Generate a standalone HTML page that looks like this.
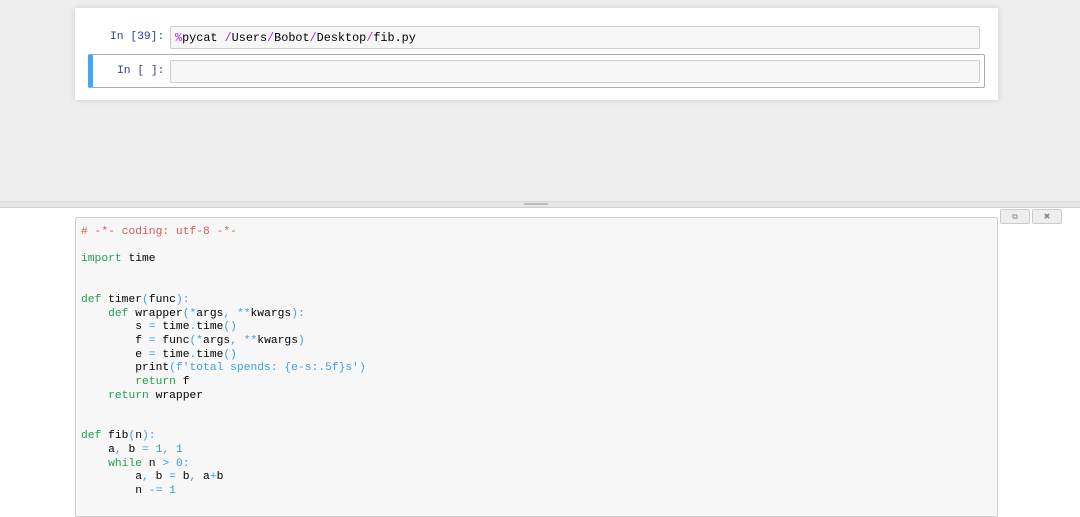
<!DOCTYPE html>
<html><head><meta charset="utf-8"><style>
*{margin:0;padding:0;box-sizing:border-box}
body{width:1080px;height:500px;overflow:hidden;background:#fff;font-family:"Liberation Mono",monospace}
#top{position:absolute;left:0;top:0;width:1080px;height:201px;background:#eeeeee}
#nb{position:absolute;left:75px;top:8px;width:923px;height:92px;background:#fff;box-shadow:0 0 6px rgba(0,0,0,.15)}
.prompt{position:absolute;font-size:11.3px;color:#303f9f;white-space:pre}
.inp{position:absolute;left:170px;width:810px;height:23px;background:#f7f7f7;border:1px solid #cfcfcf;border-radius:2px;font-size:11.8px;line-height:22px;padding-left:4px;color:#000;white-space:pre}
.mg{color:#aa22ff}
#sel{position:absolute;left:88px;top:54px;width:897px;height:34px;border:1px solid #ababab;border-left:5px solid #42a5f5;border-radius:2px}
#div{position:absolute;left:0;top:201px;width:1080px;height:7px;background:#e6e6e6;border-top:1px solid #d6d6d6;border-bottom:1px solid #cfcfcf}
#grip{position:absolute;left:524px;top:203px;width:24px;height:2px;border-top:1px solid #bbb;border-bottom:1px solid #bbb}
.btn{position:absolute;top:209px;width:30px;height:15px;background:#eee;border:1px solid #ccc;border-radius:2px;font-size:8px;color:#888;text-align:center;line-height:13px;font-family:"DejaVu Sans",sans-serif}
#code{position:absolute;left:75px;top:217px;width:923px;height:300px;background:#f7f7f7;border:1px solid #d0d0d0;border-radius:2px;padding:8px 0 0 5px;font-size:11.3px;line-height:13.63px;color:#000;white-space:pre}
.c{color:#e05555}.k{color:#22a050}.p{color:#3c9ee8}.n{color:#35a0b0}
</style></head><body>
<div id="top">
<div id="nb">
<div class="prompt" style="left:35px;top:23px">In [39]:</div>
</div>
<div class="inp" style="top:26px"><span class="mg">%</span>pycat <span class="mg">/</span>Users<span class="mg">/</span>Bobot<span class="mg">/</span>Desktop<span class="mg">/</span>fib.py</div>
<div id="sel"></div>
<div class="prompt" style="left:117px;top:65px">In [ ]:</div>
<div class="inp" style="top:60px"></div>
</div>
<div id="div"></div><div id="grip"></div>
<div class="btn" style="left:1000px">⧉</div>
<div class="btn" style="left:1032px">✖</div>
<div id="code"><span class="c"># -*- coding: utf-8 -*-</span>

<span class="k">import</span> time


<span class="k">def</span> timer<span class="p">(</span>func<span class="p">):</span>
    <span class="k">def</span> wrapper<span class="p">(*</span>args<span class="p">,</span> <span class="p">**</span>kwargs<span class="p">):</span>
        s <span class="p">=</span> time<span class="p">.</span>time<span class="p">()</span>
        f <span class="p">=</span> func<span class="p">(*</span>args<span class="p">,</span> <span class="p">**</span>kwargs<span class="p">)</span>
        e <span class="p">=</span> time<span class="p">.</span>time<span class="p">()</span>
        print<span class="p">(f'total spends: {e-s:.5f}s')</span>
        <span class="k">return</span> f
    <span class="k">return</span> wrapper


<span class="k">def</span> fib<span class="p">(</span>n<span class="p">):</span>
    a<span class="p">,</span> b <span class="p">=</span> <span class="n">1</span><span class="p">,</span> <span class="n">1</span>
    <span class="k">while</span> n <span class="p">&gt;</span> <span class="n">0</span><span class="p">:</span>
        a<span class="p">,</span> b <span class="p">=</span> b<span class="p">,</span> a<span class="p">+</span>b
        n <span class="p">-=</span> <span class="n">1</span>
</div>
</body></html>
